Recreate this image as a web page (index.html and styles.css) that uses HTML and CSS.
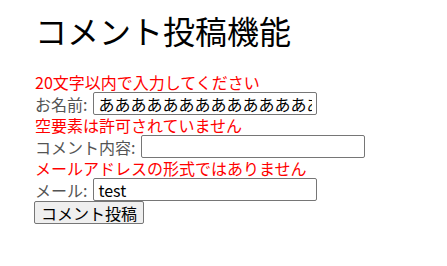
FILE: index.html
```html
<!DOCTYPE html>
<html lang="ja">
<head>
<meta charset="utf-8">
<link rel="stylesheet" href="styles.css">
</head>
<body>
<div class="page">
  <h1 class="title">コメント投稿機能</h1>
  <form class="form">
    <div class="error">20文字以内で入力してください</div>
    <div class="row"><label class="label">お名前:</label><input class="field" type="text" value="ああああああああああああああああ"></div>
    <div class="error">空要素は許可されていません</div>
    <div class="row"><label class="label">コメント内容:</label><input class="field" type="text" value=""></div>
    <div class="error">メールアドレスの形式ではありません</div>
    <div class="row"><label class="label">メール:</label><input class="field" type="text" value="test"></div>
    <div class="row"><button class="submit" type="button">コメント投稿</button></div>
  </form>
</div>
</body>
</html>
```

FILE: styles.css
```css
html, body {
  margin: 0;
  padding: 0;
  background: #fff;
}
.page {
  padding: 8px 35px;
  font-family: "Noto Sans CJK JP", "Noto Sans", sans-serif;
  font-size: 16px;
}
.title {
  margin: 0 0 20px 0;
  font-size: 32px;
  font-weight: normal;
  line-height: 44px;
  height: 44px;
  color: #000;
}
.form {
  display: flex;
  flex-direction: column;
}
.error {
  color: #ff0000;
  line-height: 20px;
  height: 20px;
}
.row {
  display: flex;
  align-items: center;
  gap: 6px;
  height: 23px;
  line-height: 20px;
}
.label {
  color: #545454;
  line-height: 20px;
}
.field {
  box-sizing: border-box;
  width: 224px;
  height: 23px;
  padding: 0 4px;
  border: 1px solid #767676;
  border-radius: 2px;
  font-family: "Noto Sans CJK JP", "Noto Sans", sans-serif;
  font-size: 16px;
  line-height: 20px;
  color: #000;
  background: #fff;
}
.submit {
  box-sizing: border-box;
  height: 23px;
  margin-left: -1px;
  padding: 0 6px;
  border: 1px solid #767676;
  border-radius: 2px;
  background: #efefef;
  font-family: "Noto Sans CJK JP", "Noto Sans", sans-serif;
  font-size: 16px;
  line-height: 20px;
  color: #000;
}
```
